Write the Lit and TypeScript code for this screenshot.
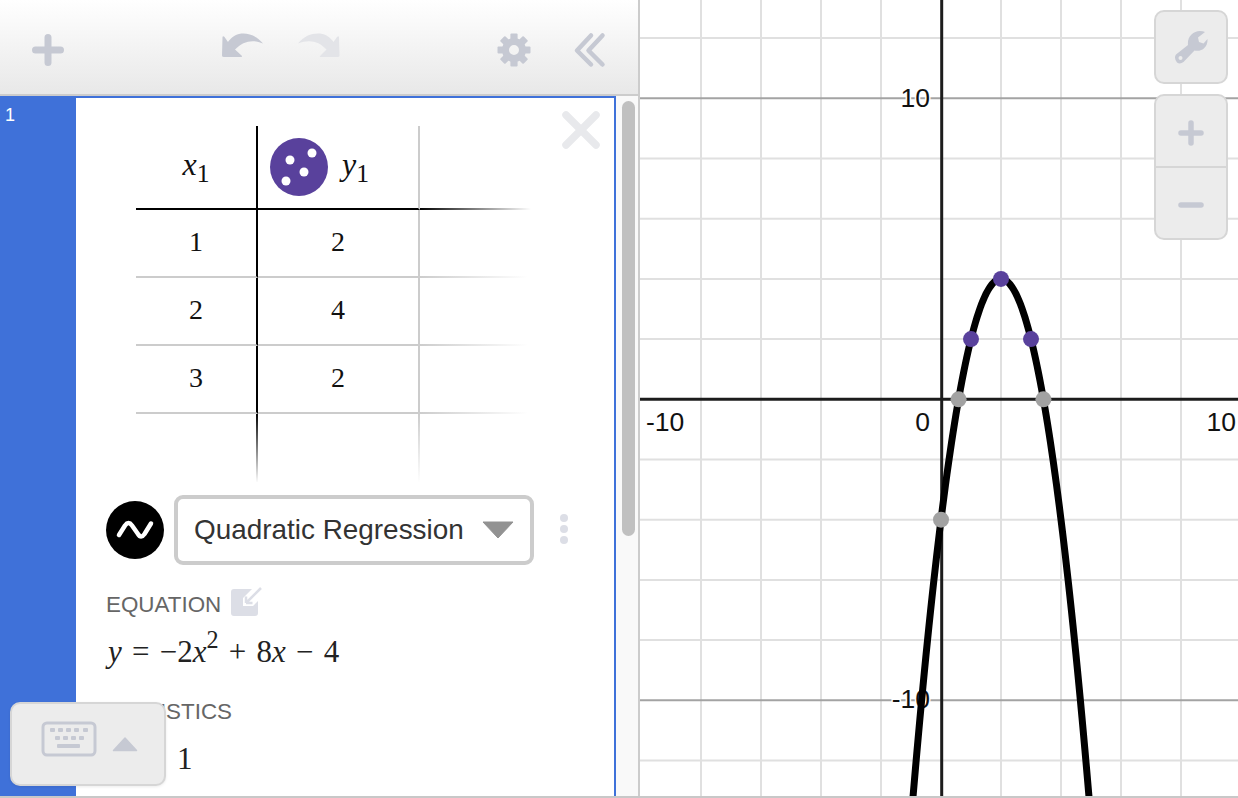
import { LitElement, html, css, svg } from "lit";
import { customElement } from "lit/decorators.js";

const OX = 941, OY = 399.3, UX = 30, UY = 30.1;
const px = (x: number) => OX + x * UX;
const py = (y: number) => OY - y * UY;

function curve() {
  const pts: string[] = [];
  for (let x = -1.1; x <= 5.1; x += 0.05) {
    pts.push(`${px(x).toFixed(1)},${py(-2 * x * x + 8 * x - 4).toFixed(1)}`);
  }
  return pts.join(" ");
}

const ICON = "#c6c9d3";

@customElement("app-root")
export class AppRoot extends LitElement {
  static styles = css`
    :host { display: block; width: 1238px; height: 798px; overflow: hidden; font-family: "Liberation Sans", Arial, sans-serif; }
    .app { display: flex; width: 1238px; height: 798px; box-sizing: border-box; border-bottom: 2px solid #c8c8c8; position: relative; }
    .left { width: 640px; flex: none; display: flex; flex-direction: column; border-right: 2px solid #ccc; box-sizing: border-box; }
    .header { height: 96px; flex: none; box-sizing: border-box; border-bottom: 2px solid #ccc; background: linear-gradient(#ffffff, #e8e8e8); display: flex; align-items: flex-start; }
    .header svg { display: block; flex: none; }
    .list { flex: 1; display: flex; min-height: 0; }
    .strip { width: 76px; flex: none; background: #3f71d9; color: #fff; font-size: 18px; line-height: 20px; padding: 7px 0 0 5px; box-sizing: border-box; border-top: 2px solid #3f71d9; }
    .expr { width: 540px; flex: none; box-sizing: border-box; border-top: 2px solid #3f71d9; border-right: 2px solid #3f71d9; background: #fff; position: relative; padding: 28px 0 0 30px; }
    .scroll { flex: 1; background: #f9f9f9; padding: 5px 3px 0 6px; }
    .thumb { width: 13px; height: 435px; border-radius: 7px; background: #c0c0c0; }
    .close { position: absolute; left: 486px; top: 13px; }
    .table { margin-left: 30px; display: grid; grid-template-columns: 122px 162px 116px; grid-template-rows: 84px 68px 68px 68px 68px; font-family: "Liberation Serif", "Times New Roman", serif; font-size: 28px; color: #111; }
    .c { display: flex; align-items: center; justify-content: center; box-sizing: border-box; border-bottom: 2px solid #ccc; padding-bottom: 3px; }
    .c.v1 { border-right: 2px solid #000; }
    .c.v2 { border-right: 2px solid #ccc; }
    .c.f { border-image: linear-gradient(to right, #ccc, transparent 92%) 1; border-top: 0; border-left: 0; border-right: 0; }
    .head { border-bottom-color: #000; font-size: 32px; padding-bottom: 6px; }
    .head.f { border-image: linear-gradient(to right, #000, transparent 95%) 1; }
    .head i sub { font-style: normal; font-size: 0.8em; line-height: 0; vertical-align: -0.28em; }
    .head.y { justify-content: flex-start; padding: 0 0 1px 12px; gap: 14px; }
    .head.y i { padding-bottom: 4px; }
    .last { border-bottom: 0; border-right: 0; position: relative; }
    .last.v1 { border-image: linear-gradient(#000, transparent) 1; border-right: 2px solid; border-top: 0; border-left: 0; border-bottom: 0; }
    .last.v2 { border-image: linear-gradient(#ccc, transparent) 1; border-right: 2px solid; border-top: 0; border-left: 0; border-bottom: 0; }
    .reg { display: flex; align-items: center; margin-top: 13px; }
    .reg svg { display: block; flex: none; }
    .drop { width: 360px; height: 70px; margin-left: 10px; box-sizing: border-box; border: 4px solid #ccc; border-radius: 9px; display: flex; align-items: center; padding-left: 16px; font-size: 27.9px; color: #333; }
    .drop span { flex: 1; }
    .drop svg { margin-right: 16px; }
    .dots { margin-left: 26px; display: flex; flex-direction: column; gap: 3px; padding-bottom: 3px; }
    .dots b { display: block; width: 8px; height: 8px; border-radius: 50%; background: #dcdee6; }
    .label { display: flex; align-items: flex-end; font-size: 22.4px; line-height: 24px; color: #666; }
    .eq { margin-top: 22px; }
    .stat { margin-top: 28px; }
    .label svg { margin-left: 10px; display: block; }
    .m { font-family: "Liberation Serif", "Times New Roman", serif; font-size: 31px; color: #222; line-height: 40px; margin: 15px 0 0 2px; white-space: pre; word-spacing: 2.5px; }
    .m sup { font-size: 0.78em; line-height: 0; vertical-align: 0.58em; }
    .m i { font-style: italic; }
    .graph { flex: 1; position: relative; background: #fff; overflow: hidden; }
    .graph > svg { display: block; }
    .graph text { font-family: "Liberation Sans", Arial, sans-serif; font-size: 26.5px; fill: #111; paint-order: stroke; stroke: #fff; stroke-width: 3px; }
    .btn { position: absolute; box-sizing: border-box; background: #ececec; border: 2px solid #d6d6d6; border-radius: 10px; display: flex; align-items: center; justify-content: center; }
    .btn svg { display: block; }
    .wrench { left: 514px; top: 10px; width: 74px; height: 74px; }
    .zoom { left: 514px; top: 94px; width: 74px; height: 146px; flex-direction: column; }
    .zoom div { flex: 1; width: 100%; display: flex; align-items: center; justify-content: center; padding-top: 4px; box-sizing: border-box; }
    .zoom div + div { border-top: 2px solid #d6d6d6; }
    .kbd { left: 10px; top: 702px; width: 156px; height: 84px; box-shadow: 0 1px 3px rgba(0,0,0,.08); justify-content: flex-start; padding-left: 29px; gap: 15px; }
    .kbd .board { margin-bottom: 10px; }
  `;

  gear() {
    const teeth = [0, 45, 90, 135, 180, 225, 270, 315];
    return svg`
      <g transform="translate(514 50)">
        ${teeth.map((a) => svg`<rect x="-3.6" y="-16.5" width="7.2" height="7" rx="1" fill="${ICON}" transform="rotate(${a})"></rect>`)}
        <circle r="8.5" fill="none" stroke="${ICON}" stroke-width="7"></circle>
      </g>`;
  }

  grid() {
    const xs = [-8, -6, -4, -2, 2, 4, 6, 8];
    const ys = [12, 8, 6, 4, 2, -2, -4, -6, -8, -12];
    return svg`
      ${xs.map((v) => svg`<line x1="${px(v)}" x2="${px(v)}" y1="0" y2="798" stroke="#e0e0e0" stroke-width="2"></line>`)}
      ${ys.map((v) => svg`<line x1="640" x2="1238" y1="${py(v)}" y2="${py(v)}" stroke="#e0e0e0" stroke-width="2"></line>`)}
      ${[10, -10].map((v) => svg`<line x1="640" x2="1238" y1="${py(v)}" y2="${py(v)}" stroke="#a3a3a3" stroke-width="2"></line>`)}
      <line x1="640" x2="1238" y1="${OY}" y2="${OY}" stroke="#1c1c1c" stroke-width="3"></line>
      <line x1="941.7" x2="941.7" y1="0" y2="798" stroke="#1c1c1c" stroke-width="3"></line>`;
  }

  render() {
    return html`<div class="app">
      <div class="left">
        <div class="header">
          <svg width="638" height="94" viewBox="0 0 638 94">
            <path d="M48 37.500v25M35.500 50h25" stroke="${ICON}" stroke-width="7" stroke-linecap="round" fill="none"></path>
            <path d="M222.5 37 L222 55.500 Q222 57 224 57 H241 Q243 57 241.500 55.500 L235 49.500 C243 41 253 39 263 43.500 C256 35 247 32.500 239 34 C234 35 230 39 228 42 L224.500 37 Q223 35.500 222.500 37Z" fill="${ICON}"></path>
            <path d="M339 37 L339.500 55.500 Q339.500 57 337.500 57 H321 Q319 57 320.500 55.500 L326.500 49.500 C319 41 309 39 298 43.500 C305 35 314 32.500 322.500 34 C327.500 35 331.500 39 333.500 42 L337 37 Q338.500 35.500 339 37Z" fill="#e3e4e8"></path>
            ${this.gear()}
            <path d="M591 35.500 L577 50.500 L591 64.500 M602.500 35.500 L588.500 50.500 L602.500 64.500" stroke="${ICON}" stroke-width="4.500" stroke-linecap="round" stroke-linejoin="round" fill="none"></path>
          </svg>
        </div>
        <div class="list">
          <div class="strip">1</div>
          <div class="expr">
            <svg class="close" width="38" height="38" viewBox="0 0 38 38"><path d="M4 4L34 34M34 4L4 34" stroke="#e8e9ec" stroke-width="7.500" stroke-linecap="round"></path></svg>
            <div class="table">
              <div class="c head v1"><i>x<sub>1</sub></i></div>
              <div class="c head v2 y">
                <svg width="58" height="58" viewBox="0 0 58 58"><circle cx="29" cy="29" r="29" fill="#59419c"></circle>
                  <g fill="#fff"><circle cx="20" cy="22" r="4.500"></circle><circle cx="42" cy="15" r="4.500"></circle><circle cx="34" cy="34" r="4.500"></circle><circle cx="16" cy="43" r="4.500"></circle></g></svg>
                <i>y<sub>1</sub></i>
              </div>
              <div class="c head f"></div>
              ${[[1, 2], [2, 4], [3, 2]].map(([a, b]) => html`
                <div class="c v1">${a}</div><div class="c v2">${b}</div><div class="c f"></div>`)}
              <div class="c last v1"></div><div class="c last v2"></div><div class="c last"></div>
            </div>
            <div class="reg">
              <svg width="58" height="58" viewBox="0 0 58 58"><circle cx="29" cy="29" r="29" fill="#000"></circle>
                <path d="M13 34 L19 24.500 Q22.500 19.500 26 24.500 L32 33 Q35 38 38.500 33 L45 22.500" fill="none" stroke="#fff" stroke-width="4.500" stroke-linecap="round" stroke-linejoin="round"></path></svg>
              <div class="drop"><span>Quadratic Regression</span>
                <svg width="32" height="18" viewBox="0 0 32 18"><path d="M1 1H31L16 17Z" fill="#929292" stroke="#929292" stroke-linejoin="round"></path></svg></div>
              <div class="dots"><b></b><b></b><b></b></div>
            </div>
            <div class="label eq">EQUATION
              <svg width="32" height="30" viewBox="0 0 32 30"><path d="M3 2H21L12 11V19H22L27 14V26Q27 29 24 29H3Q0 29 0 26V5Q0 2 3 2Z" fill="#dcdee6"></path><path d="M15 16V9.500M15 16H21.500M15 16L30 1" fill="none" stroke="#dcdee6" stroke-width="2.500"></path></svg>
            </div>
            <div class="m"><i>y</i> = −2<i>x</i><sup>2</sup> + 8<i>x</i> − 4</div>
            <div class="label stat">STATISTICS</div>
            <div class="m"><i>R</i><sup>2</sup> = 1</div>
          </div>
          <div class="scroll"><div class="thumb"></div></div>
        </div>
      </div>
      <div class="graph">
        <svg width="598" height="796" viewBox="640 0 598 796">
          ${this.grid()}
          <text x="930" y="107" text-anchor="end">10</text>
          <text x="646" y="431">-10</text>
          <text x="930" y="431" text-anchor="end">0</text>
          <text x="1236" y="431" text-anchor="end">10</text>
          <text x="930" y="708" text-anchor="end">-10</text>
          <polyline points="${curve()}" fill="none" stroke="#000" stroke-width="7"></polyline>
          ${[[1, 2], [2, 4], [3, 2]].map(([x, y]) => svg`<circle cx="${px(x)}" cy="${py(y)}" r="8" fill="#59419c"></circle>`)}
          ${[[2 - Math.SQRT2, 0], [2 + Math.SQRT2, 0], [0, -4]].map(([x, y]) => svg`<circle cx="${px(x)}" cy="${py(y)}" r="8" fill="#a2a2a2"></circle>`)}
        </svg>
        <div class="btn wrench">
          <svg width="34" height="34" viewBox="0 0 34 34"><path d="M2 24.500 L14 15 C13 7 19 1 26 1 Q29 1 31 2 L24 7.500 L25 12 L29.500 13.500 L33.500 9 C34 17 28 22 20.500 20.500 L9.500 32 Q6 34.500 3 32.500 Q-0.500 28 2 24.500Z" fill="${ICON}"></path><circle cx="6.500" cy="28" r="2" fill="#ececec"></circle></svg>
        </div>
        <div class="btn zoom">
          <div><svg width="26" height="26" viewBox="0 0 26 26"><path d="M13 3V23M3 13H23" stroke="${ICON}" stroke-width="5.500" stroke-linecap="round"></path></svg></div>
          <div><svg width="26" height="8" viewBox="0 0 26 8"><path d="M3 4H23" stroke="${ICON}" stroke-width="5.500" stroke-linecap="round"></path></svg></div>
        </div>
      </div>
      <div class="btn kbd">
        <svg class="board" width="56" height="36" viewBox="0 0 56 36"><rect x="2" y="2" width="52" height="32" rx="4" fill="none" stroke="${ICON}" stroke-width="3"></rect>
          <g fill="${ICON}">
            ${[9, 17, 25, 33, 42].map((x) => svg`<rect x="${x}" y="7" width="5" height="4" rx="1"></rect>`)}
            ${[14, 22, 30, 38].map((x) => svg`<rect x="${x}" y="15" width="5" height="4" rx="1"></rect>`)}
            <rect x="16" y="23" width="23" height="4" rx="1"></rect>
          </g></svg>
        <svg width="26" height="16" viewBox="0 0 26 16"><path d="M1.500 14.500H24.500L13 2Z" fill="${ICON}" stroke="${ICON}" stroke-width="1.500" stroke-linejoin="round"></path></svg>
      </div>
    </div>`;
  }
}
